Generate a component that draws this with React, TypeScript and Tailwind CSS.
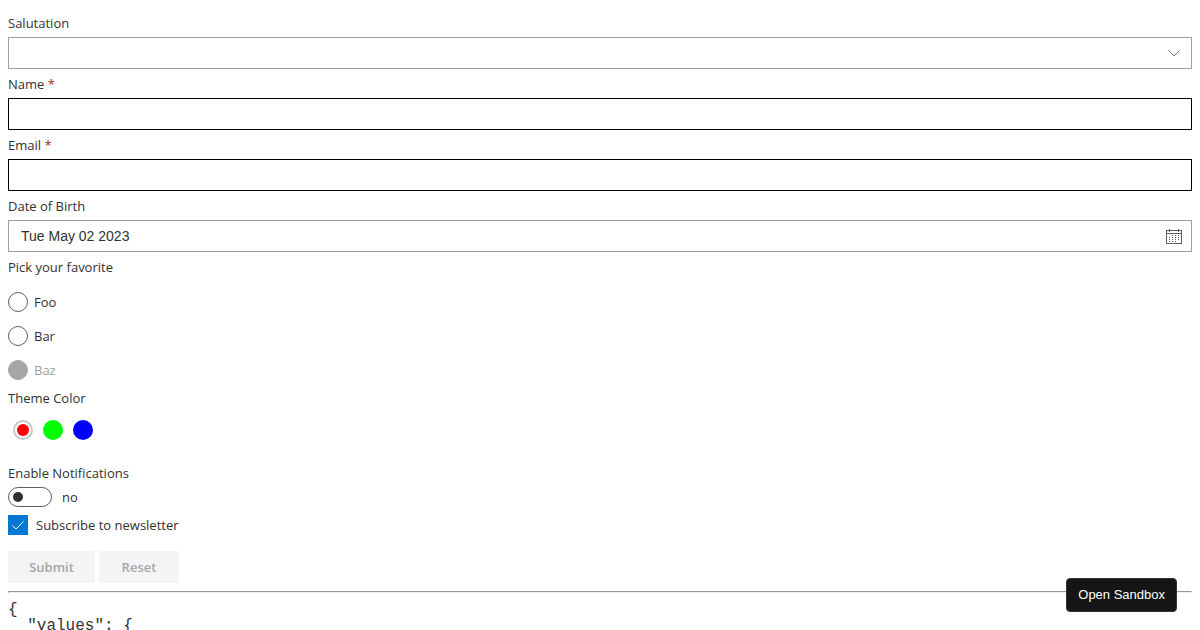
import React, { useState } from "react";

const labelClass = "block pt-[6px] pb-1 text-[13px] leading-[19px]";

const colors = [
  { id: "red", fill: "bg-[#ff0000]" },
  { id: "green", fill: "bg-[#00ff00]" },
  { id: "blue", fill: "bg-[#0000ff]" },
];

const options = [
  { id: "foo", text: "Foo", disabled: false },
  { id: "bar", text: "Bar", disabled: false },
  { id: "baz", text: "Baz", disabled: true },
];

function Required() {
  return <span className="text-[#a4262c]"> *</span>;
}

function ChevronDown() {
  return (
    <svg viewBox="0 0 12 7" className="h-[7px] w-3" fill="none" stroke="#807a72" strokeWidth="1">
      <path d="M0.5 0.5L6 6L11.5 0.5" />
    </svg>
  );
}

function Calendar() {
  return (
    <svg viewBox="0 0 16 15" className="h-[15px] w-4" shapeRendering="crispEdges">
      <path d="M0.5 1.5H15.5V14.5H0.5ZM0 4.5H16M3.5 0V3M12.5 0V3" fill="none" stroke="#605e5c" />
      <path
        d="M6 6.5h1M9 6.5h1M12 6.5h1M3 8.5h1M6 8.5h1M9 8.5h1M12 8.5h1M3 10.5h1M6 10.5h1M9 10.5h1M12 10.5h1M3 12.5h1M6 12.5h1M9 12.5h1"
        stroke="#605e5c"
      />
    </svg>
  );
}

export default function App() {
  const [favorite, setFavorite] = useState("");
  const [color, setColor] = useState("red");
  const [notify, setNotify] = useState(false);
  const [subscribe, setSubscribe] = useState(true);

  return (
    <div className="h-screen overflow-hidden bg-white p-2 font-['Open_Sans',sans-serif] text-[13px] leading-5 text-[#323130]">
      <form onSubmit={(e) => e.preventDefault()}>
        <label htmlFor="salutation" className={labelClass}>Salutation</label>
        <div className="grid items-center">
          <select
            id="salutation"
            defaultValue=""
            className="col-start-1 row-start-1 h-8 w-full appearance-none border border-[#a19f9d] bg-white px-2"
          >
            <option value=""></option>
            <option>Mr.</option>
            <option>Mrs.</option>
          </select>
          <span className="pointer-events-none col-start-1 row-start-1 mr-3 justify-self-end">
            <ChevronDown />
          </span>
        </div>

        <label htmlFor="name" className={labelClass}>Name<Required /></label>
        <input id="name" type="text" required className="block h-8 w-full border border-black px-2 outline-none" />

        <label htmlFor="email" className={labelClass}>Email<Required /></label>
        <input id="email" type="email" required className="block h-8 w-full border border-black px-2 outline-none" />

        <label htmlFor="birth" className={labelClass}>Date of Birth</label>
        <div className="grid items-center">
          <input
            id="birth"
            type="text"
            defaultValue="Tue May 02 2023"
            className="col-start-1 row-start-1 h-8 w-full border border-[#a19f9d] px-3 font-['Liberation_Sans',sans-serif] text-[14px]"
          />
          <span className="pointer-events-none col-start-1 row-start-1 mr-[10px] justify-self-end">
            <Calendar />
          </span>
        </div>

        <fieldset>
          <legend className={labelClass}>Pick your favorite</legend>
          {options.map((o) => (
            <label
              key={o.id}
              className={`mt-2 flex h-[26px] items-center gap-[6px] ${o.disabled ? "text-[#a19f9d]" : ""}`}
            >
              <input
                type="radio"
                name="favorite"
                value={o.id}
                disabled={o.disabled}
                checked={favorite === o.id}
                onChange={() => setFavorite(o.id)}
                className="size-5 appearance-none rounded-full border border-[#605e5c] checked:border-[6px] checked:border-[#0078d4] disabled:border-[#a6a6a6] disabled:bg-[#a6a6a6]"
              />
              <span>{o.text}</span>
            </label>
          ))}
        </fieldset>

        <fieldset className="pb-[13px]">
          <legend className={labelClass}>Theme Color</legend>
          <div className="flex gap-[10px] px-[5px] pt-2 pb-[5px]">
            {colors.map((c) => (
              <label
                key={c.id}
                className={`block size-5 rounded-full ${color === c.id ? "border-2 border-[#c8c8c8] p-[2px]" : ""}`}
              >
                <input
                  type="radio"
                  name="color"
                  aria-label={c.id}
                  checked={color === c.id}
                  onChange={() => setColor(c.id)}
                  className={`block size-full appearance-none rounded-full ${c.fill}`}
                />
              </label>
            ))}
          </div>
        </fieldset>

        <label htmlFor="notify" className={labelClass}>Enable Notifications</label>
        <div className="mb-2 flex h-5 items-center gap-[10px]">
          <button
            id="notify"
            type="button"
            role="switch"
            aria-checked={notify}
            onClick={() => setNotify(!notify)}
            className={`flex h-5 w-11 items-center rounded-full border border-[#605e5c] px-1 ${notify ? "justify-end" : ""}`}
          >
            <span className="size-[10px] rounded-full bg-[#323130]" />
          </button>
          <span>{notify ? "yes" : "no"}</span>
        </div>

        <label className="flex h-5 items-center gap-2">
          <span className="grid">
            <input
              type="checkbox"
              checked={subscribe}
              onChange={() => setSubscribe(!subscribe)}
              className="col-start-1 row-start-1 size-5 appearance-none border border-[#323130] checked:border-[#0078d4] checked:bg-[#0078d4]"
            />
            <svg viewBox="0 0 20 20" className="pointer-events-none col-start-1 row-start-1 size-5" fill="none" stroke="#fff">
              <path d="M4.5 10.5L8 14L15.5 6.5" />
            </svg>
          </span>
          <span>Subscribe to newsletter</span>
        </label>

        <div className="mt-4 flex gap-1">
          <button type="submit" disabled className="h-8 w-[87px] bg-[#f4f4f4] font-semibold text-[#a6a6a6]">Submit</button>
          <button type="button" disabled className="h-8 w-20 bg-[#f4f4f4] font-semibold text-[#a6a6a6]">Reset</button>
        </div>
      </form>

      <hr className="mt-2 mb-[9px] h-[2px] border border-[#eeeeee] border-t-[#9a9a9a] border-l-[#9a9a9a]" />
      <pre className="font-['Liberation_Mono',monospace] text-[16px] leading-4 text-[#333333]">
        {'{\n  "values": {'}
      </pre>

      <button
        type="button"
        className="fixed right-[23px] bottom-[18px] h-[34px] rounded border border-[#343434] bg-[#151515] px-[11px] font-['Liberation_Sans',sans-serif] text-[13px] text-white"
      >
        Open Sandbox
      </button>
    </div>
  );
}
